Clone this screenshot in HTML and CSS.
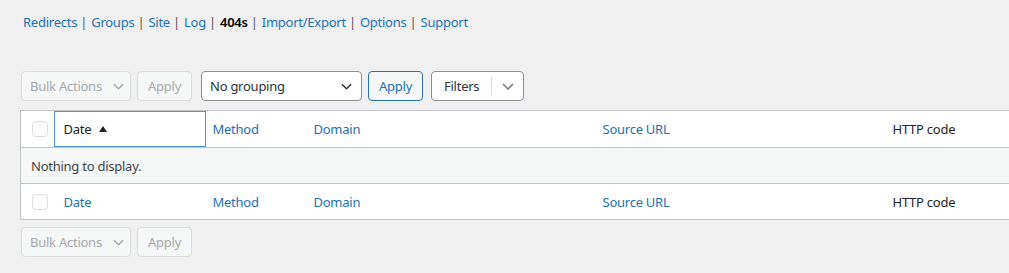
FILE: index.html
```html
<!DOCTYPE html>
<html lang="en">

<head>
    <meta charset="UTF-8">
    <title>404s | Redirection</title>
    <link rel="stylesheet" href="styles.css">
</head>

<body>
    <div class="wrap">
        <!-- Sub menu -->
        <ul class="subsubsub">
            <li><a href="#">Redirects</a> |</li>
            <li><a href="#">Groups</a> |</li>
            <li><a href="#">Site</a> |</li>
            <li><a href="#">Log</a> |</li>
            <li><a href="#" class="current">404s</a> |</li>
            <li><a href="#">Import/Export</a> |</li>
            <li><a href="#">Options</a> |</li>
            <li><a href="#">Support</a></li>
        </ul>

        <!-- Top toolbar -->
        <div class="tablenav top">
            <div class="select disabled">Bulk Actions
                <svg class="chev" viewBox="0 0 12 7"><polyline points="1,1 6,6 11,1" /></svg>
            </div>
            <button class="button" disabled>Apply</button>
            <div class="select grouping">No grouping
                <svg class="chev" viewBox="0 0 12 7"><polyline points="1,1 6,6 11,1" /></svg>
            </div>
            <button class="button primary-outline">Apply</button>
            <div class="filters">
                <span class="filters-label">Filters</span>
                <span class="filters-toggle">
                    <svg class="chev" viewBox="0 0 12 7"><polyline points="1,1 6,6 11,1" /></svg>
                </span>
            </div>
        </div>

        <table class="list-table">
            <thead>
                <tr>
                    <td class="col-cb"><span class="cb"></span></td>
                    <th class="col-date sorted">Date <span class="arrow"></span></th>
                    <th class="col-method"><a href="#">Method</a></th>
                    <th class="col-domain"><a href="#">Domain</a></th>
                    <th class="col-url"><a href="#">Source URL</a></th>
                    <th class="col-code">HTTP code</th>
                </tr>
            </thead>
            <tbody>
                <tr class="empty">
                    <td colspan="6">Nothing to display.</td>
                </tr>
            </tbody>
            <tfoot>
                <tr>
                    <td class="col-cb"><span class="cb"></span></td>
                    <th class="col-date"><a href="#">Date</a></th>
                    <th class="col-method"><a href="#">Method</a></th>
                    <th class="col-domain"><a href="#">Domain</a></th>
                    <th class="col-url"><a href="#">Source URL</a></th>
                    <th class="col-code">HTTP code</th>
                </tr>
            </tfoot>
        </table>

        <!-- Bottom toolbar -->
        <div class="tablenav bottom">
            <div class="select disabled">Bulk Actions
                <svg class="chev" viewBox="0 0 12 7"><polyline points="1,1 6,6 11,1" /></svg>
            </div>
            <button class="button" disabled>Apply</button>
        </div>
    </div>
</body>

</html>
```

FILE: styles.css
```css
body {
    font-family: "Noto Sans", "Open Sans", sans-serif;
    font-size: 13px;
    letter-spacing: -0.25px;
    margin: 0;
    padding: 0;
    background-color: #f0f0f1;
    color: #3c434a;
    overflow: hidden;
}

a {
    color: #2271b1;
    text-decoration: none;
}

.wrap {
    padding: 0 0 0 20px;
    width: 1120px;
}

/* Sub menu */
.subsubsub {
    list-style: none;
    margin: 0;
    padding: 12px 0 0 3px;
    display: flex;
    gap: 4px;
    color: #50575e;
    line-height: 20px;
}

.subsubsub .current {
    color: #000;
    font-weight: 600;
}

/* Toolbars */
.tablenav {
    display: flex;
    align-items: center;
    height: 30px;
}

.tablenav.top {
    margin: 39px 0 9px 1px;
}

.tablenav.bottom {
    margin: 7px 0 0 1px;
}

.select,
.button,
.filters {
    box-sizing: border-box;
    height: 30px;
    border: 1px solid #8c8f94;
    border-radius: 4px;
    background: #fff;
    font-family: inherit;
    font-size: 13px;
    letter-spacing: inherit;
    display: flex;
    align-items: center;
    color: #2c3338;
}

.select {
    padding: 0 8px;
    justify-content: space-between;
}

.select.disabled {
    width: 110px;
    background: #f6f7f7;
    border-color: #dcdcde;
    color: #a7aaad;
    margin-right: 6px;
    padding-right: 6px;
}

.select.grouping {
    width: 161px;
    margin-right: 6px;
}

.button {
    padding: 0 10px;
    margin-right: 8px;
}

.button[disabled] {
    background: #f6f7f7;
    border-color: #dcdcde;
    color: #a7aaad;
    width: 55px;
    justify-content: center;
    margin-right: 9px;
}

.button.primary-outline {
    background: #f6f7f7;
    border-color: #2271b1;
    color: #2271b1;
    width: 55px;
    justify-content: center;
}

.filters {
    width: 93px;
    padding: 0;
}

.filters-label {
    padding: 0 12px;
    width: 60px;
    box-sizing: border-box;
    border-right: 1px solid #dcdcde;
    line-height: 18px;
}

.filters-toggle {
    flex: 1;
    display: flex;
    justify-content: center;
}

.chev {
    width: 11px;
    height: 7px;
    fill: none;
    stroke: #50575e;
    stroke-width: 1.6;
}

.disabled .chev {
    stroke: #a7aaad;
}

.grouping .chev {
    stroke: #2c3338;
    margin-right: 1px;
}

.filters .chev {
    stroke: #787c82;
    width: 12px;
}

/* Table */
.list-table {
    border-collapse: collapse;
    table-layout: fixed;
    width: 1100px;
    background: #fff;
    border: 1px solid #c3c4c7;
}

.list-table th,
.list-table td {
    text-align: left;
    font-weight: normal;
    height: 36px;
    padding: 0 10px;
    box-sizing: border-box;
    color: #1d2327;
}

.list-table thead th,
.list-table thead td {
    height: 37px;
}

.list-table thead tr,
.list-table tbody tr {
    border-bottom: 1px solid #c3c4c7;
}

.col-cb {
    width: 33px;
    padding: 0 0 0 11px !important;
}

.col-date { width: 152px; }
.list-table .col-method { width: 98px; padding-left: 7px; }
.col-domain { width: 289px; }
.col-url { width: 290px; }

.list-table .sorted {
    box-shadow: inset 0 0 0 1px #4f94d4;
}

.arrow {
    display: inline-block;
    width: 0;
    height: 0;
    border-left: 4px solid transparent;
    border-right: 4px solid transparent;
    border-bottom: 6px solid #1d2327;
    margin-left: 5px;
    vertical-align: 2px;
}

.cb {
    display: block;
    width: 16px;
    height: 16px;
    box-sizing: border-box;
    border: 1px solid #dcdcde;
    border-radius: 4px;
    background: #fff;
}

.list-table .empty td {
    background: #f6f7f7;
    color: #3c434a;
    padding-left: 10px;
}
```
